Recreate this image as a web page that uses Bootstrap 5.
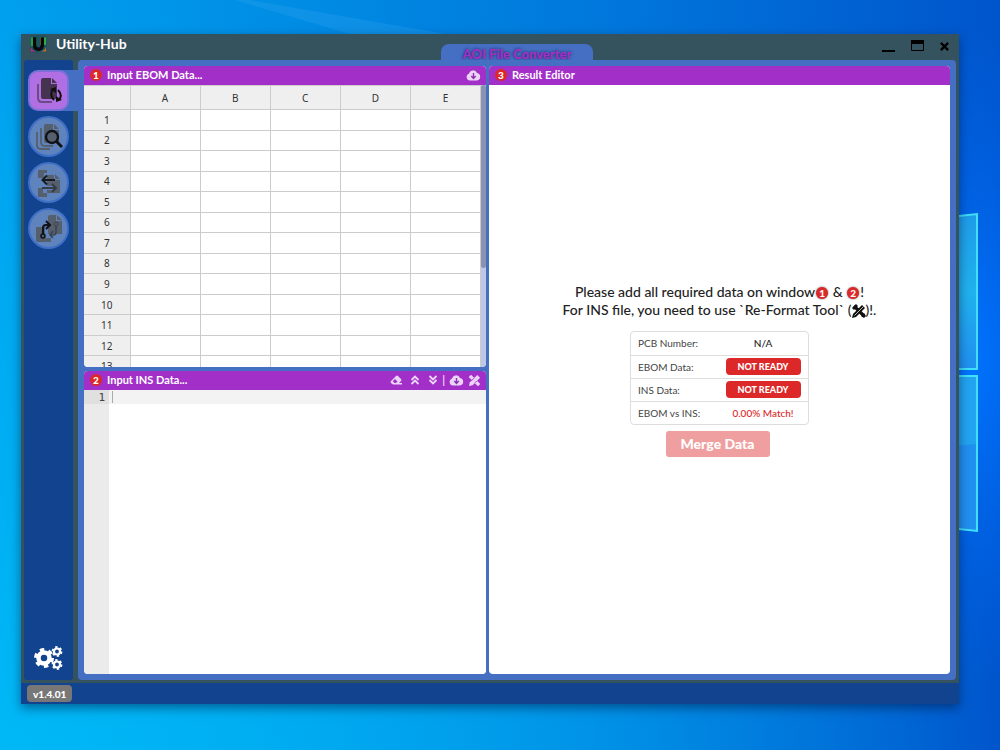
<!DOCTYPE html>
<html lang="en">
<head>
<meta charset="utf-8">
<meta name="viewport" content="width=device-width, initial-scale=1">
<title>Utility-Hub</title>
<link href="https://cdn.jsdelivr.net/npm/bootstrap@5.3.0/dist/css/bootstrap.min.css" rel="stylesheet">
<style>
:root { --navy:#12438e; --teal:#35525f; --frame:#446fc3; --purple:#a22fc8; --alert:#dc2828; }
body { font-family:Lato,sans-serif; font-size:12px; line-height:18px; color:#222; background:#0078e0; }
button { font-family:inherit; }
.desktop { min-height:100vh; padding:34px 41px 46px 21px; position:relative; overflow:hidden; }
.wallpaper { position:absolute; inset:0; width:100%; height:100%; }
.app-window { position:relative; background:var(--teal); box-shadow:0 4px 10px rgba(0,20,60,.5); min-width:0; }
.titlebar { display:grid; grid-template-columns:54px 1fr 152px 1fr; height:26px; padding:0 3px; }
.brand { grid-column:1 / 3; color:#fff; font-weight:700; font-size:14px; line-height:20px; padding-left:5px; }
.title-tab { background:var(--frame); border-radius:8px 8px 0 0; margin-top:10px; color:#a22fc8; font-weight:900; font-size:13px; line-height:20px; text-shadow:0 0 3px #1c2450; white-space:nowrap; }
.win-btns { padding:0 7px 6px 0; }
.win-btn { color:#000; line-height:0; }
.bare { border:0; background:none; padding:0; line-height:0; }
.workspace { padding:0 3px 3px; gap:5px; }
.sidebar { width:49px; flex:none; background:var(--navy); border-radius:3px; padding:10px 0 9px 4px; gap:6px; }
.tool { width:41px; height:41px; margin-bottom:-1px; flex:none; border-radius:50%; border:2px solid #3f6fc6; background:#5f83bd; }
.tool-slot { background:linear-gradient(90deg,transparent 20px,var(--frame) 20px); margin-right:-5px; height:41px; margin-bottom:-1px; }
.tool.active { border-radius:10px; background:#b070e4; border-color:#7a70d8; }
.gear { width:30px; margin:0 0 0 5px; }
.stage { background:var(--frame); border-radius:4px; padding:6px; gap:3px; }
.left-col { flex:402 1 0; gap:4px; }
.right-col { flex:461 1 0; }
.pane { background:#fff; border-radius:4px; overflow:hidden; }
.pane-ebom { flex:301 1 0; }
.pane-ins { flex:303 1 0; }
.pane-head { background:var(--purple); color:#fff; height:19px; flex:none; font-size:11px; font-weight:700; padding:0 5px 1px 6px; gap:5px; }
.pane-tools { color:#ecd4f6; }
.num { display:inline-block; width:12px; height:12px; border-radius:50%; background:var(--alert); color:#fff; font-size:10px; line-height:12px; font-weight:900; text-align:center; flex:none; }
.msg .num { box-shadow:0 0 2px #555; margin:0 1px; }
.sheet { width:100%; height:292px; table-layout:fixed; border-collapse:collapse; font-family:"Noto Sans",sans-serif; font-size:10px; line-height:12px; color:#333; text-align:center; }
.sheet th, .sheet td { border:1px solid #ccc; border-left:0; padding:0; font-weight:400; }
.sheet th { background:#efefef; }
.sheet thead th { height:24px; }
.scroll-track { width:5px; flex:none; background:#bcc8e6; }
.scroll-thumb { height:65%; background:#8b93b3; border-radius:3px; }
.gutter { width:25px; flex:none; background:#ebebeb; font:11px/14px "DejaVu Sans Mono",monospace; color:#444; }
.gutter div { background:#e0e0e0; padding:1px 4px 0 0; text-align:right; height:14px; }
.editor { border:0; outline:0; resize:none; padding:0 3px; font:11px/14px "DejaVu Sans Mono",monospace; background:linear-gradient(#aaa,#aaa) 3px 1px/1px 12px no-repeat, linear-gradient(#f3f3f3,#f3f3f3) 0 0/100% 14px no-repeat, #fff; }
.msg { font-size:14px; font-weight:500; line-height:18px; color:#222; margin:0 0 12px; }
.merge-wrap { padding-bottom:20px; }
.status-box { width:179px; border:1px solid #ddd; border-radius:4px; border-collapse:separate; border-spacing:0; font-size:10px; line-height:16px; }
.status-box th, .status-box td { height:23px; padding:0; border-top:1px solid #ddd; }
.status-box tr:first-child > * { border-top:0; }
.status-box th { font-weight:400; padding-left:7px; color:#444; }
.status-box td { width:90px; text-align:center; font-weight:500; }
.state { display:block; margin:0 auto; width:75px; background:var(--alert); color:#fff; border-radius:4px; font-size:9px; font-weight:900; line-height:17px; }
.status-box .bad { color:var(--alert); }
.merge { margin:6px 4px 0 0; height:26px; width:104px; padding:0; font-size:14px; font-weight:900; line-height:24px; color:#fff; background:#ef9f9f; border:0; border-radius:3px; }
.statusbar { background:var(--navy); height:21px; padding:2px 6px; }
.version { background:#777; color:#fff; border-radius:4px; font-size:10px; font-weight:900; line-height:18px; padding:0 6px; }
</style>
</head>
<body>
<div class="desktop d-flex">
<svg class="wallpaper" viewBox="0 0 1000 750" preserveAspectRatio="none" aria-hidden="true">
 <defs>
  <linearGradient id="sky"><stop offset="0" stop-color="#00a0ee"/><stop offset=".3" stop-color="#008ce4"/><stop offset=".6" stop-color="#0078dc"/><stop offset="1" stop-color="#0055cc"/></linearGradient>
  <radialGradient id="low" cx="0" cy="1" r="1"><stop offset="0" stop-color="#00b8f6"/><stop offset="1" stop-color="#00b8f6" stop-opacity="0"/></radialGradient>
  <radialGradient id="halo"><stop offset="0" stop-color="#0074ff"/><stop offset="1" stop-color="#0064f0" stop-opacity="0"/></radialGradient>
  <linearGradient id="pane" x2="0" y2="1"><stop offset="0" stop-color="#1e9ce8"/><stop offset=".5" stop-color="#20b2ee"/><stop offset="1" stop-color="#2090f0"/></linearGradient>
 </defs>
 <rect width="1000" height="750" fill="url(#sky)"/><rect width="1000" height="750" fill="url(#low)"/>
 <ellipse cx="970" cy="360" rx="130" ry="330" fill="url(#halo)"/>
 <path d="M235 0 370 40H480L250 0z" fill="#38a8f0" opacity=".25"/>
 <path d="M940 218 977 214V369H940z" fill="url(#pane)" stroke="#3fe0f8" stroke-width="2"/>
 <path d="M940 376H977V531L940 527z" fill="#2190f0" stroke="#3fe0f8" stroke-width="2"/>
 <path d="M940 377H976V444L940 447z" fill="#22a4f0"/>
</svg>
<div class="app-window d-flex flex-column flex-grow-1">
 <header class="titlebar">
  <div class="brand d-flex align-items-start gap-2">
   <svg width="19" height="20" viewBox="0 0 20 20" aria-hidden="true"><rect x="1" y="1" width="18" height="18" rx="3" fill="#1d5360"/><path d="M2 3h3v9H2z" fill="#2a9c48"/><path d="M6 3h2v9H6z" fill="#2e9a48"/><path d="M12 3h3v8h-3z" fill="#c8b020"/><path d="M15 3h3v8h-3z" fill="#35a848"/><path d="M2 13c1 4 4 5 7 5H2z" fill="#d02080"/><path d="M18 13c-1 4-4 5-7 5h7z" fill="#d86a28"/><path d="M6 3v8q0 4.500 4 4.500t4-4.500V3" fill="none" stroke="#08090d" stroke-width="3.600"/></svg>
   <span>Utility-Hub</span>
  </div>
  <div class="title-tab text-center">AOI File Converter</div>
  <div class="win-btns d-flex justify-content-end align-items-center gap-3">
   <button class="bare win-btn" aria-label="Minimize"><svg width="13" height="14" viewBox="0 0 13 14"><path d="M0 12h13" stroke="#000" stroke-width="2"/></svg></button>
   <button class="bare win-btn" aria-label="Maximize"><svg width="13" height="12" viewBox="0 0 13 12"><path d="M.5.5h12v10H.5z" fill="none" stroke="#000"/><path d="M0 0h13v4H0z"/></svg></button>
   <button class="bare win-btn" aria-label="Close"><svg width="9" height="9" viewBox="0 0 10 10"><path d="m1 1 8 8M9 1 1 9" stroke="#000" stroke-width="2.600"/></svg></button>
  </div>
 </header>
 <div class="workspace d-flex flex-grow-1">
  <nav class="sidebar d-flex flex-column" aria-label="Tools">
   <div class="tool-slot"><button class="tool active bare" aria-label="AOI file converter"><svg width="30" height="28" viewBox="0 0 30 28"><path d="M4 7v14q0 4 4 4h10" fill="none" stroke="#6a4b86" stroke-width="2"/><path d="M7 3q0-2 2-2h8v6h6v13q0 2-2 2H9q-2 0-2-2z" fill="#453350"/><path d="M18 1l5 5h-5z" fill="#453350"/><path d="M20 23q-5-5-1-11M24 13q5 5 1 10" fill="none" stroke="#111" stroke-width="2"/><path d="m16 12 6-2v6zm12 11-6 2v-6z" fill="#111"/></svg></button></div>
   <button class="tool bare" aria-label="Search files"><svg width="28" height="28" viewBox="0 0 28 28"><path d="M2 9v13q0 4 4 4h9M6 5v14q0 4 4 4h8" fill="none" stroke="#565f6d" stroke-width="1.800"/><path d="M9 3q0-2 2-2h7v6h6v13H11q-2 0-2-2z" fill="#565f6d"/><path d="M19 1l5 5h-5z" fill="#565f6d"/><circle cx="17" cy="14" r="6" fill="none" stroke="#101216" stroke-width="2.400"/><path d="m21 18 6 6" stroke="#101216" stroke-width="3"/></svg></button>
   <button class="tool bare" aria-label="Exchange files"><svg width="28" height="28" viewBox="0 0 28 28"><path d="M3 1h9v3H9v5H3zM3 19h5v5h4v4H3zM12 6h7v5h6v13H12v-3h6v-4h-6z" fill="#565f6d"/><path d="M20 5l5 5h-5z" fill="#565f6d"/><path d="M20 11H8M12 6.500 7.500 11l4.500 4.500" fill="none" stroke="#17191d" stroke-width="2"/><path d="M7 19h14m-4-4 4 4-4 4" fill="none" stroke="#363c46" stroke-width="2"/></svg></button>
   <button class="tool bare" aria-label="Compare files"><svg width="30" height="28" viewBox="0 0 30 28"><path d="M2 12h9v11h6v4H4q-2 0-2-2zM14 2q0-2 2-2h6v6h6v13H14z" fill="#565f6d"/><path d="M23 0l5 5h-5z" fill="#565f6d"/><path d="M9 19v-6q0-3 3-3h3M12 6l4 4-4 4" fill="none" stroke="#101216" stroke-width="2"/><circle cx="9" cy="21" r="2" fill="none" stroke="#101216" stroke-width="1.500"/><path d="M22 11v6q0 3-3 3h-2m2-4-3 4 3 3" fill="none" stroke="#3d444e" stroke-width="1.600"/><circle cx="22" cy="9" r="2" fill="none" stroke="#3d444e"/></svg></button>
   <button class="bare gear mt-auto" aria-label="Settings"><svg width="30" height="26" viewBox="0 0 30 26" fill="none" stroke="#fff"><circle cx="11" cy="13" r="5.500" stroke-width="4.500"/><circle cx="11" cy="13" r="8.500" stroke-width="3" stroke-dasharray="4.450 4.450"/><circle cx="24" cy="6.500" r="3" stroke-width="2.200"/><circle cx="24" cy="6.500" r="4.500" stroke-width="1.800" stroke-dasharray="2.350 2.350"/><circle cx="24" cy="19.500" r="3" stroke-width="2.200"/><circle cx="24" cy="19.500" r="4.500" stroke-width="1.800" stroke-dasharray="2.350 2.350"/></svg></button>
  </nav>
  <main class="stage d-flex flex-grow-1">
   <div class="left-col d-flex flex-column">
    <section class="pane pane-ebom d-flex flex-column">
     <div class="pane-head d-flex align-items-center"><span class="num">1</span><span>Input EBOM Data...</span>
      <button class="bare pane-tools ms-auto" aria-label="Load EBOM data"><svg width="15" height="12" viewBox="0 0 15 12"><path d="M4 11.500a3.500 3.500 0 0 1-1-6.800A4.200 4.200 0 0 1 11 4a3.800 3.800 0 0 1 0 7.500z" fill="#ecd4f6"/><path d="M7.500 4v5M5.300 7l2.200 2.500L9.700 7" fill="none" stroke="#8a30b0" stroke-width="1.400"/></svg></button></div>
     <div class="d-flex flex-grow-1 overflow-hidden" style="height:0">
      <div class="flex-grow-1">
       <table class="sheet">
        <colgroup><col style="width:46px"><col><col><col><col><col></colgroup>
        <thead><tr><th></th><th>A</th><th>B</th><th>C</th><th>D</th><th>E</th></tr></thead>
        <tbody>
         <tr><th>1</th><td></td><td></td><td></td><td></td><td></td></tr>
         <tr><th>2</th><td></td><td></td><td></td><td></td><td></td></tr>
         <tr><th>3</th><td></td><td></td><td></td><td></td><td></td></tr>
         <tr><th>4</th><td></td><td></td><td></td><td></td><td></td></tr>
         <tr><th>5</th><td></td><td></td><td></td><td></td><td></td></tr>
         <tr><th>6</th><td></td><td></td><td></td><td></td><td></td></tr>
         <tr><th>7</th><td></td><td></td><td></td><td></td><td></td></tr>
         <tr><th>8</th><td></td><td></td><td></td><td></td><td></td></tr>
         <tr><th>9</th><td></td><td></td><td></td><td></td><td></td></tr>
         <tr><th>10</th><td></td><td></td><td></td><td></td><td></td></tr>
         <tr><th>11</th><td></td><td></td><td></td><td></td><td></td></tr>
         <tr><th>12</th><td></td><td></td><td></td><td></td><td></td></tr>
         <tr><th>13</th><td></td><td></td><td></td><td></td><td></td></tr>
        </tbody>
       </table>
      </div>
      <div class="scroll-track"><div class="scroll-thumb"></div></div>
     </div>
    </section>
    <section class="pane pane-ins d-flex flex-column">
     <div class="pane-head d-flex align-items-center"><span class="num">2</span><span>Input INS Data...</span>
      <div class="pane-tools d-flex align-items-center ms-auto">
       <button class="bare me-2" aria-label="Clear"><svg width="12" height="10" viewBox="0 0 12 10"><path d="m1 6 5-5q1-1 2 0l3 3q1 1 0 2L9 8h3v1.500H3L1 8q-1-1 0-2z" fill="#ecd4f6"/><path d="M3 6l2-2 2.500 2.500L6 8H4.500L3 6.500z" fill="#a22fc8"/></svg></button>
       <button class="bare me-2" aria-label="Scroll to top"><svg width="10" height="10" viewBox="0 0 10 10"><path d="m1.500 5 3.500-3.500L8.500 5M1.500 9 5 5.500 8.500 9" fill="none" stroke="#ecd4f6" stroke-width="1.800"/></svg></button>
       <button class="bare me-1" aria-label="Scroll to bottom"><svg width="10" height="10" viewBox="0 0 10 10"><path d="M1.500 1 5 4.500 8.500 1M1.500 5 5 8.500 8.500 5" fill="none" stroke="#ecd4f6" stroke-width="1.800"/></svg></button>
       <span class="me-1">|</span>
       <button class="bare me-1" aria-label="Load INS data"><svg width="15" height="12" viewBox="0 0 15 12"><path d="M4 11.500a3.500 3.500 0 0 1-1-6.800A4.200 4.200 0 0 1 11 4a3.800 3.800 0 0 1 0 7.500z" fill="#ecd4f6"/><path d="M7.500 4v5M5.300 7l2.200 2.500L9.700 7" fill="none" stroke="#8a30b0" stroke-width="1.400"/></svg></button>
       <button class="bare" aria-label="Re-Format Tool"><svg width="13" height="13" viewBox="0 0 14 14"><path d="m2 2 10 10" stroke="#ecd4f6" stroke-width="3.600"/><path d="m1 13 1-4 8-8 3 3-8 8z" fill="#ecd4f6"/><path d="m3.500 7.500 3-3M7.500 9.500l2-2" stroke="#a22fc8"/></svg></button>
      </div></div>
     <div class="d-flex flex-grow-1">
      <div class="gutter"><div>1</div></div>
      <textarea class="editor flex-grow-1" aria-label="INS data" spellcheck="false"></textarea>
     </div>
    </section>
   </div>
   <section class="pane right-col d-flex flex-column">
    <div class="pane-head d-flex align-items-center"><span class="num">3</span><span>Result Editor</span></div>
    <div class="merge-wrap d-flex flex-column flex-grow-1 align-items-center justify-content-center">
     <p class="msg text-center">Please add all required data on window<span class="num">1</span> &amp; <span class="num">2</span>!<br>For INS file, you need to use `Re-Format Tool` (<svg width="14" height="14" viewBox="0 0 14 14" aria-hidden="true"><path d="m2 2 10 10" stroke="#111" stroke-width="3.200"/><path d="m0 14 1-4 9-9 3 3-9 9z" fill="#111"/><path d="M0 4l4-4 2 2-4 4zM9 12l3-3 2 3-2 2z" fill="#111"/><path d="m2.500 11.500 9-9" stroke="#fff" stroke-width=".7"/></svg>)!.</p>
     <table class="status-box">
      <tr><th>PCB Number:</th><td>N/A</td></tr>
      <tr><th>EBOM Data:</th><td><span class="state">NOT READY</span></td></tr>
      <tr><th>INS Data:</th><td><span class="state">NOT READY</span></td></tr>
      <tr><th>EBOM vs INS:</th><td class="bad">0.00% Match!</td></tr>
     </table>
     <button class="merge">Merge Data</button>
    </div>
   </section>
  </main>
 </div>
 <footer class="statusbar d-flex"><span class="version">v1.4.01</span></footer>
</div>
</div>
<script src="https://cdn.jsdelivr.net/npm/bootstrap@5.3.0/dist/js/bootstrap.bundle.min.js"></script>
</body>
</html>
